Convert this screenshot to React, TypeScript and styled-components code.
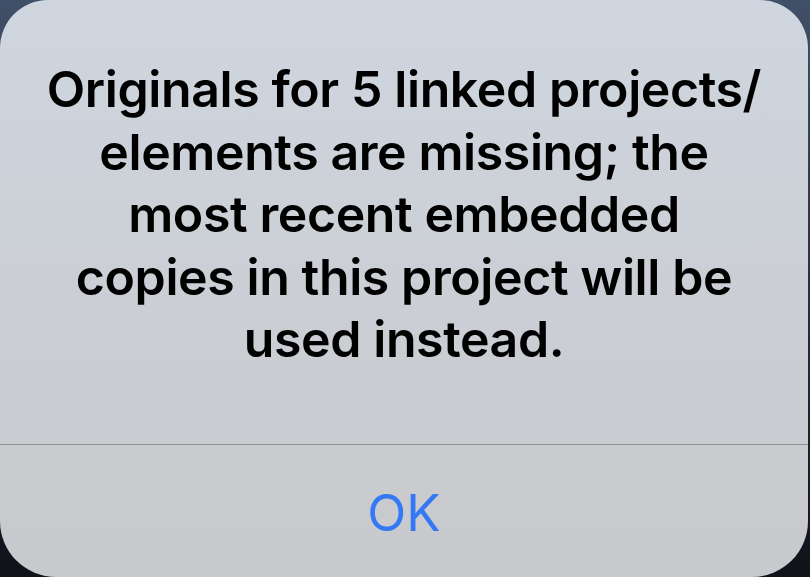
import React from "react";
import styled, { createGlobalStyle } from "styled-components";

const Global = createGlobalStyle`
  html, body {
    margin: 0;
    padding: 0;
    width: 810px;
    height: 577px;
    overflow: hidden;
    background: linear-gradient(180deg, #405068 0%, #2a3345 45%, #101219 100%);
  }
  #root { width: 810px; height: 577px; }
`;

const Alert = styled.div`
  width: 808px;
  height: 577px;
  border-radius: 48px 48px 56px 56px;
  background: linear-gradient(180deg, #cfd6df 0%, #cbced4 55%, #c8c9cc 100%);
  display: flex;
  flex-direction: column;
  overflow: hidden;
  font-family: Inter, "Liberation Sans", sans-serif;
`;

const Message = styled.p`
  margin: 0;
  height: 444px;
  box-sizing: border-box;
  padding: 58px 20px 0;
  text-align: center;
  font-size: 50px;
  line-height: 62.5px;
  font-weight: 600;
  color: #000;
  letter-spacing: -0.4px;
`;

const Divider = styled.div`
  height: 1px;
  background: #8e8f93;
`;

const Button = styled.button`
  flex: 1;
  border: none;
  background: transparent;
  padding: 2px 0 0;
  font-family: Inter, "Liberation Sans", sans-serif;
  font-size: 51px;
  font-weight: 400;
  color: #3478f6;
  display: flex;
  align-items: center;
  justify-content: center;
`;

export default function App() {
  return (
    <>
      <Global />
      <Alert>
        <Message>
          Originals for 5 linked projects/
          <br />
          elements are missing; the
          <br />
          most recent embedded
          <br />
          copies in this project will be
          <br />
          used instead.
        </Message>
        <Divider />
        <Button>OK</Button>
      </Alert>
    </>
  );
}
